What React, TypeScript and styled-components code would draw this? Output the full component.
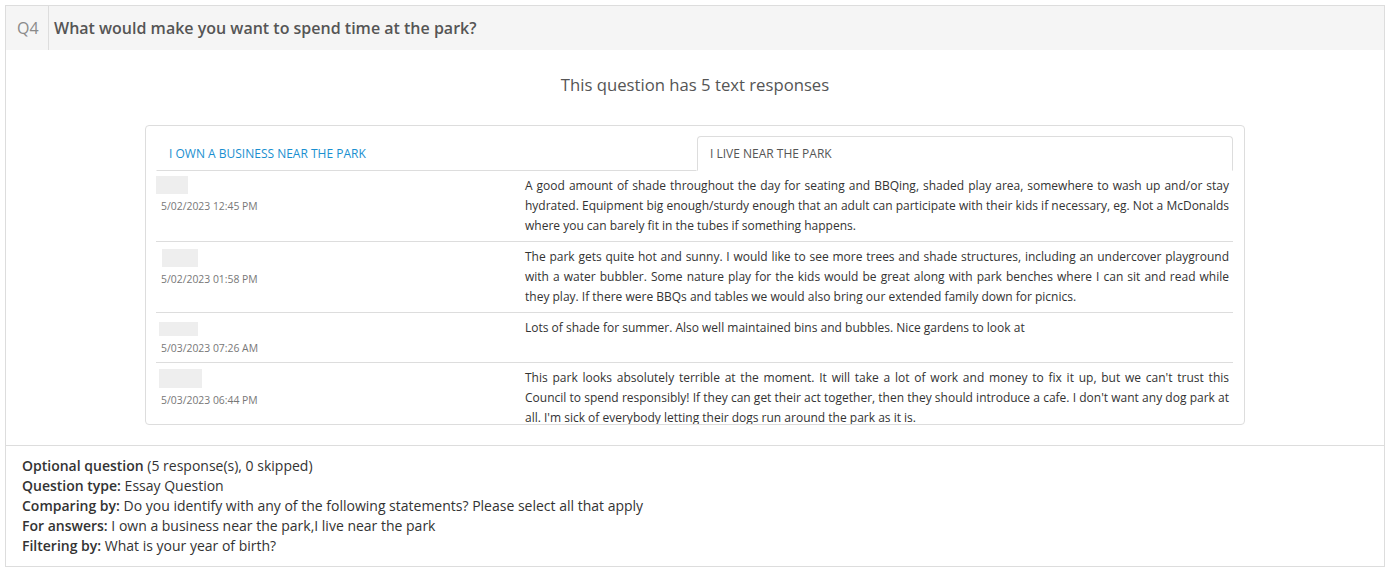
import React from "react";
import styled, { createGlobalStyle } from "styled-components";

const GlobalStyle = createGlobalStyle`
  html, body {
    margin: 0;
    padding: 0;
    background: #ffffff;
  }
  body {
    font-family: "Open Sans", "Liberation Sans", sans-serif;
    color: #333;
  }
  * { box-sizing: border-box; }
`;

const Page = styled.div`
  padding: 5px 5px 0 5px;
`;

const Panel = styled.section`
  width: 1380px;
  border: 1px solid #dddddd;
  background: #fff;
`;

const Header = styled.header`
  display: flex;
  align-items: stretch;
  height: 44px;
  background: #f5f5f5;
`;

const QNumber = styled.div`
  width: 43px;
  border-right: 1px solid #dddddd;
  display: flex;
  align-items: center;
  padding-left: 11px;
  font-size: 16px;
  color: #8a8a8a;
`;

const QTitle = styled.h2`
  margin: 0;
  display: flex;
  align-items: center;
  padding-left: 5px;
  font-size: 16px;
  font-weight: 600;
  color: #555;
`;

const Body = styled.div`
  padding: 25px 0 20px;
  border-bottom: 1px solid #dddddd;
`;

const Summary = styled.p`
  margin: 0 0 30px;
  text-align: center;
  font-size: 16.7px;
  line-height: 20px;
  color: #555;
`;

const Card = styled.div`
  width: 1100px;
  height: 300px;
  margin: 0 auto;
  border: 1px solid #dddddd;
  border-radius: 4px;
  padding: 10px 11px 0 10px;
  display: flex;
  flex-direction: column;
  overflow: hidden;
`;

const Tabs = styled.div`
  display: grid;
  grid-template-columns: 541px 1fr;
  height: 35px;
  flex: none;
`;

const Tab = styled.div<{ $active?: boolean }>`
  display: flex;
  align-items: center;
  padding-left: 12px;
  font-size: 12px;
  text-transform: uppercase;
  color: ${(p) => (p.$active ? "#555" : "#1a8fd0")};
  border: 1px solid ${(p) => (p.$active ? "#dddddd" : "transparent")};
  border-bottom: 1px solid ${(p) => (p.$active ? "transparent" : "#dddddd")};
  border-radius: ${(p) => (p.$active ? "4px 4px 0 0" : "0")};
  background: #fff;
`;

const List = styled.div`
  flex: 1;
  overflow: hidden;
`;

const Row = styled.div`
  display: grid;
  grid-template-columns: 360px 1fr;
  border-bottom: 1px solid #dddddd;
`;

const Meta = styled.div`
  padding: 5px 5px 7px;
`;

const Redacted = styled.div<{ $w: number; $h: number; $top: number; $left: number }>`
  width: ${(p) => p.$w}px;
  height: ${(p) => p.$h}px;
  margin-top: ${(p) => p.$top}px;
  margin-left: ${(p) => p.$left}px;
  background: #eeeeee;
`;

const Stamp = styled.div`
  margin-top: 5px;
  font-size: 10.4px;
  line-height: 14px;
  color: #777;
`;

const Answer = styled.div`
  padding: 5px 4px 5px 9px;
  font-size: 12px;
  line-height: 20px;
  color: #333;
  text-align: justify;
`;

const Footer = styled.div`
  padding: 10px 16px;
  font-size: 14px;
  line-height: 20px;
  color: #333;
`;

const Line = styled.div``;

const Label = styled.span`
  font-weight: 600;
`;

type Response = {
  date: string;
  blob: { w: number; h: number; top: number; left: number };
  text: string;
};

const responses: Response[] = [
  {
    date: "5/02/2023 12:45 PM",
    blob: { w: 32, h: 18, top: 0, left: -5 },
    text:
      "A good amount of shade throughout the day for seating and BBQing, shaded play area, somewhere to wash up and/or stay hydrated. Equipment big enough/sturdy enough that an adult can participate with their kids if necessary, eg. Not a McDonalds where you can barely fit in the tubes if something happens.",
  },
  {
    date: "5/02/2023 01:58 PM",
    blob: { w: 36, h: 18, top: 2, left: 1 },
    text:
      "The park gets quite hot and sunny. I would like to see more trees and shade structures, including an undercover playground with a water bubbler. Some nature play for the kids would be great along with park benches where I can sit and read while they play. If there were BBQs and tables we would also bring our extended family down for picnics.",
  },
  {
    date: "5/03/2023 07:26 AM",
    blob: { w: 39, h: 14, top: 4, left: -2 },
    text: "Lots of shade for summer. Also well maintained bins and bubbles. Nice gardens to look at",
  },
  {
    date: "5/03/2023 06:44 PM",
    blob: { w: 43, h: 19, top: 1, left: -2 },
    text:
      "This park looks absolutely terrible at the moment. It will take a lot of work and money to fix it up, but we can't trust this Council to spend responsibly! If they can get their act together, then they should introduce a cafe. I don't want any dog park at all. I'm sick of everybody letting their dogs run around the park as it is.",
  },
];

export default function App() {
  return (
    <Page>
      <GlobalStyle />
      <Panel>
        <Header>
          <QNumber>Q4</QNumber>
          <QTitle>What would make you want to spend time at the park?</QTitle>
        </Header>
        <Body>
          <Summary>This question has 5 text responses</Summary>
          <Card>
            <Tabs>
              <Tab>I own a business near the park</Tab>
              <Tab $active>I live near the park</Tab>
            </Tabs>
            <List>
              {responses.map((r) => (
                <Row key={r.date}>
                  <Meta>
                    <Redacted $w={r.blob.w} $h={r.blob.h} $top={r.blob.top} $left={r.blob.left} />
                    <Stamp>{r.date}</Stamp>
                  </Meta>
                  <Answer>{r.text}</Answer>
                </Row>
              ))}
            </List>
          </Card>
        </Body>
        <Footer>
          <Line>
            <Label>Optional question</Label> (5 response(s), 0 skipped)
          </Line>
          <Line>
            <Label>Question type:</Label> Essay Question
          </Line>
          <Line>
            <Label>Comparing by:</Label> Do you identify with any of the following statements? Please select all that apply
          </Line>
          <Line>
            <Label>For answers:</Label> I own a business near the park,I live near the park
          </Line>
          <Line>
            <Label>Filtering by:</Label> What is your year of birth?
          </Line>
        </Footer>
      </Panel>
    </Page>
  );
}
